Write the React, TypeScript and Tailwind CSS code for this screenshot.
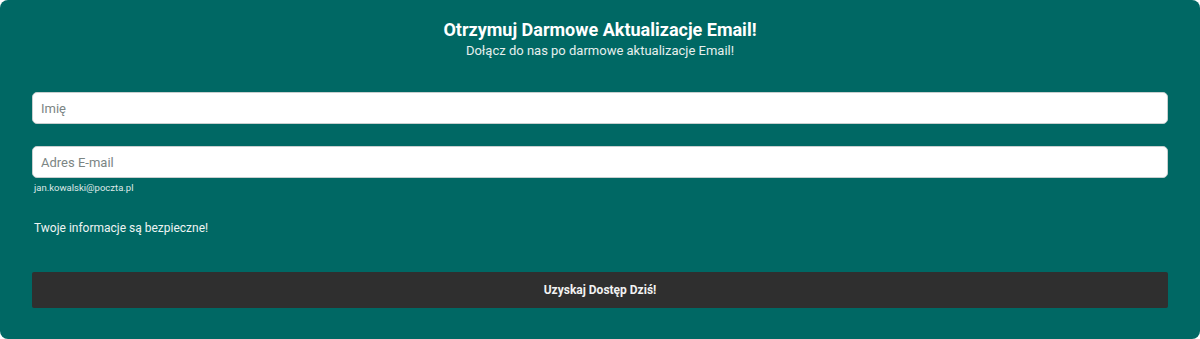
import { useState } from 'react';

export default function App() {
    const [name, setName] = useState('');
    const [email, setEmail] = useState('');

    return (
        <div className="w-[1200px] h-[339px] bg-white font-['Roboto',sans-serif]">
            <div className="h-full rounded-lg bg-[#006864] px-8 pt-[19px] text-white">
                {/* Nagłówek */}
                <div className="text-center">
                    <h2 className="text-[18px] leading-[22px] font-bold">Otrzymuj Darmowe Aktualizacje Email!</h2>
                    <p className="mt-[1px] text-[13px] leading-[18px] text-[#e6efee]">
                        Dołącz do nas po darmowe aktualizacje Email!
                    </p>
                </div>

                <form className="mt-[32px]" onSubmit={(e) => e.preventDefault()}>
                    <input
                        type="text"
                        value={name}
                        onChange={(e) => setName(e.target.value)}
                        placeholder="Imię"
                        className="block h-8 w-full rounded-[5px] border border-[#c8cfcf] bg-white px-2 text-[13px] text-[#333] outline-none placeholder:text-[#7b8584]"
                    />
                    <input
                        type="email"
                        value={email}
                        onChange={(e) => setEmail(e.target.value)}
                        placeholder="Adres E-mail"
                        className="mt-[22px] block h-8 w-full rounded-[5px] border border-[#c8cfcf] bg-white px-2 text-[13px] text-[#333] outline-none placeholder:text-[#7b8584]"
                    />
                    <p className="mt-[3px] pl-[2px] text-[9.5px] leading-[13px] text-[#dfe9e8]">jan.kowalski@poczta.pl</p>

                    <p className="mt-[25px] pl-[2px] text-[12px] leading-[18px] text-[#eef4f3]">Twoje informacje są bezpieczne!</p>

                    <button
                        type="submit"
                        className="mt-[35px] block h-9 w-full rounded-[2px] bg-[#2f2f2f] text-[12px] font-bold text-[#f2f2f2]"
                    >
                        Uzyskaj Dostęp Dziś!
                    </button>
                </form>
            </div>
        </div>
    );
}
